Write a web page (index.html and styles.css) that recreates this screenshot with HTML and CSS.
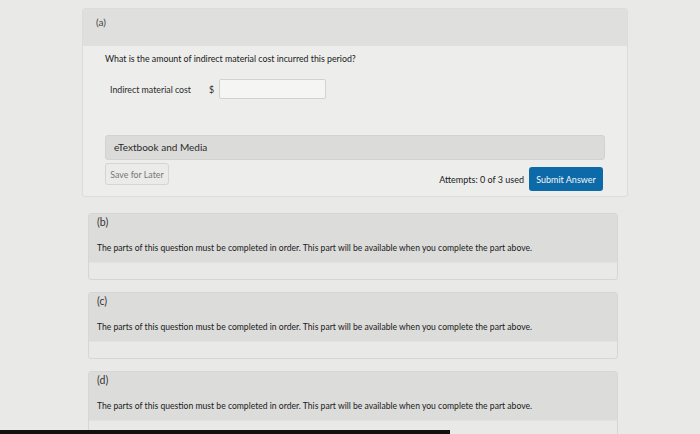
FILE: index.html
```html
<!DOCTYPE html>
<html lang="en">

<head>
    <meta charset="UTF-8">
    <meta name="viewport" content="width=device-width, initial-scale=1.0">
    <title>Question Parts</title>
    <link rel="stylesheet" href="styles.css">
</head>

<body>
    <div class="page">
        <!-- Part (a) -->
        <div class="part-active">
            <div class="part-header">(a)</div>
            <div class="part-body">
                <p class="question">What is the amount of indirect material cost incurred this period?</p>
                <div class="answer-row">
                    <span class="answer-label">Indirect material cost</span>
                    <span class="currency">$</span>
                    <input type="text" class="answer-input">
                </div>
                <div class="media-bar">eTextbook and Media</div>
                <div class="actions">
                    <button class="save-btn">Save for Later</button>
                    <div class="submit-group">
                        <span class="attempts">Attempts: 0 of 3 used</span>
                        <button class="submit-btn">Submit Answer</button>
                    </div>
                </div>
            </div>
        </div>

        <!-- Locked parts -->
        <div class="part-locked">
            <div class="locked-top">
                <div class="locked-label">(b)</div>
                <p class="locked-text">The parts of this question must be completed in order. This part will be available when you complete the part above.</p>
            </div>
            <div class="locked-footer"></div>
        </div>

        <div class="part-locked">
            <div class="locked-top">
                <div class="locked-label">(c)</div>
                <p class="locked-text">The parts of this question must be completed in order. This part will be available when you complete the part above.</p>
            </div>
            <div class="locked-footer"></div>
        </div>

        <div class="part-locked">
            <div class="locked-top">
                <div class="locked-label">(d)</div>
                <p class="locked-text">The parts of this question must be completed in order. This part will be available when you complete the part above.</p>
            </div>
            <div class="locked-footer"></div>
        </div>
    </div>
    <div class="bottom-edge"></div>
</body>

</html>
```

FILE: styles.css
```css
body {
    margin: 0;
    font-family: Lato, 'Open Sans', sans-serif;
    background-color: #e9e9e8;
    color: #2b2b2b;
    height: 434px;
    overflow: hidden;
    position: relative;
}

.page {
    padding-top: 8px;
    padding-left: 82px;
}

.part-active {
    width: 544px;
    background-color: #ededec;
    border: 1px solid #dcdcdb;
    border-radius: 3px;
}

.part-header {
    background-color: #dfdfde;
    height: 37px;
    padding: 7px 0 0 13px;
    box-sizing: border-box;
    font-size: 10px;
    color: #444;
}

.part-body {
    padding: 7px 22px 5px 22px;
}

.question {
    margin: 0;
    font-size: 8.8px;
    color: #1a1a1a;
}

.answer-row {
    display: flex;
    align-items: center;
    margin-top: 15px;
    margin-left: 5px;
}

.answer-label {
    font-size: 8.8px;
    width: 99px;
    color: #2a2a2a;
}

.currency {
    font-size: 8.8px;
    width: 10px;
    color: #2a2a2a;
}

.answer-input {
    width: 107px;
    height: 20px;
    box-sizing: border-box;
    border: 1px solid #d2d2d1;
    background-color: #f5f5f4;
    border-radius: 2px;
    padding: 0;
}

.media-bar {
    margin-top: 36px;
    height: 25px;
    background-color: #dbdbda;
    border: 1px solid #d2d2d1;
    border-radius: 3px;
    font-size: 10px;
    line-height: 23px;
    padding-left: 8px;
    box-sizing: border-box;
    color: #2a2a2a;
}

.actions {
    display: flex;
    justify-content: space-between;
    align-items: flex-start;
    margin-top: 3px;
}

.save-btn {
    font-family: Lato, sans-serif;
    font-size: 8.8px;
    color: #777;
    background-color: #ebebea;
    border: 1px solid #d5d5d4;
    border-radius: 3px;
    height: 22px;
    width: 64px;
    padding: 0;
}

.submit-group {
    display: flex;
    align-items: center;
    gap: 5px;
    margin-top: 4px;
    margin-right: 2px;
}

.attempts {
    font-size: 9px;
    color: #1a1a1a;
}

.submit-btn {
    font-family: Lato, sans-serif;
    font-size: 9px;
    color: #f4f8fb;
    background-color: #0d6aa8;
    border: none;
    border-radius: 3px;
    height: 24px;
    width: 74px;
    padding: 0;
}

.part-locked {
    width: 528px;
    margin-left: 6px;
    margin-top: 16px;
    border: 1px solid #d6d6d5;
    border-radius: 3px;
    background-color: #e9e9e8;
}

.part-locked + .part-locked {
    margin-top: 12px;
}

.locked-top {
    background-color: #dcdcdb;
    height: 48px;
    padding: 2px 0 0 8px;
    box-sizing: border-box;
}

.locked-label {
    font-size: 10.5px;
    color: #333;
}

.locked-text {
    margin: 15px 0 0 0;
    font-size: 8.6px;
    color: #1a1a1a;
}

.locked-footer {
    height: 16px;
    border-top: 1px solid #e2e2e1;
}

.bottom-edge {
    position: absolute;
    left: 0;
    bottom: 0;
    width: 450px;
    height: 4px;
    background-color: #111;
}
```
